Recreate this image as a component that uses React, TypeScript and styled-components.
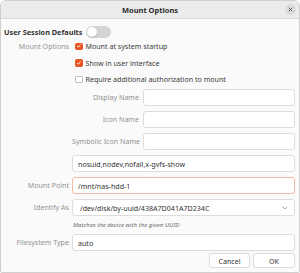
import React from "react";
import styled, { createGlobalStyle } from "styled-components";

const GlobalStyle = createGlobalStyle`
  html, body {
    margin: 0;
    padding: 0;
    background: #ffffff;
  }
  * {
    box-sizing: border-box;
  }
`;

const Window = styled.div`
  width: 300px;
  height: 273px;
  display: flex;
  flex-direction: column;
  background: #fafafa;
  border: 1px solid #cfcfcf;
  border-radius: 6px 6px 2px 2px;
  overflow: hidden;
  font-family: "Noto Sans", "Open Sans", sans-serif;
  font-size: 7.1px;
  color: #3a3a3a;
`;

const HeaderBar = styled.div`
  height: 18px;
  flex: 0 0 18px;
  display: grid;
  grid-template-columns: 1fr auto 1fr;
  align-items: center;
  background: #ebebeb;
  border-bottom: 1px solid #dadada;
  padding: 0 3px;
`;

const Title = styled.div`
  grid-column: 2;
  font-weight: 700;
  font-size: 7.5px;
  color: #2e2e2e;
`;

const CloseButton = styled.div`
  grid-column: 3;
  justify-self: end;
  width: 11px;
  height: 11px;
  border-radius: 50%;
  background: #dcdcdc;
  display: flex;
  align-items: center;
  justify-content: center;
`;

const Content = styled.div`
  flex: 1;
  display: flex;
  flex-direction: column;
  padding: 7px 4px 0 3px;
`;

const SessionRow = styled.div`
  display: flex;
  align-items: center;
  gap: 4px;
  height: 12px;
`;

const SectionTitle = styled.div`
  font-weight: 700;
  font-size: 7.3px;
  color: #333333;
`;

const Toggle = styled.div<{ on: boolean }>`
  position: relative;
  width: 25px;
  height: 12px;
  border-radius: 6px;
  background: ${({ on }) => (on ? "#e95420" : "#d4d4d4")};
`;

const Knob = styled.div<{ on: boolean }>`
  position: absolute;
  top: 1px;
  left: ${({ on }) => (on ? "14px" : "1px")};
  width: 10px;
  height: 10px;
  border-radius: 50%;
  background: #ffffff;
  box-shadow: 0 0.5px 1px rgba(0, 0, 0, 0.25);
`;

const Form = styled.div`
  display: grid;
  grid-template-columns: 65px 1fr;
  column-gap: 3px;
  row-gap: 5px;
  align-items: center;
`;

const Label = styled.div<{ top?: boolean }>`
  text-align: right;
  color: #939393;
  white-space: nowrap;
  align-self: ${({ top }) => (top ? "start" : "center")};
  line-height: 16.5px;
`;

const CheckList = styled.div`
  display: flex;
  flex-direction: column;
  margin-bottom: -3.5px;
`;

const CheckRow = styled.div`
  height: 16.5px;
  display: flex;
  align-items: center;
  gap: 3px;
  padding-left: 3px;
  white-space: nowrap;
`;

const Box = styled.div<{ checked: boolean }>`
  width: 7.5px;
  height: 7.5px;
  border-radius: 1.5px;
  flex: 0 0 7.5px;
  display: flex;
  align-items: center;
  justify-content: center;
  background: ${({ checked }) => (checked ? "#e95420" : "#ffffff")};
  border: 1px solid ${({ checked }) => (checked ? "#e95420" : "#bdbdbd")};
`;

const SubGrid = styled.div`
  grid-column: 2;
  display: grid;
  grid-template-columns: 67px 1fr;
  column-gap: 4px;
  row-gap: 5px;
  align-items: center;
`;

const Entry = styled.div<{ focused?: boolean; span?: boolean }>`
  height: 17px;
  display: flex;
  align-items: center;
  padding: 0 5px;
  background: #ffffff;
  border: 1px solid ${({ focused }) => (focused ? "#f3b9a3" : "#dcdcdc")};
  border-radius: 3px;
  color: #333333;
  white-space: nowrap;
  overflow: hidden;
  grid-column: ${({ span }) => (span ? "2" : "auto")};
`;

const Combo = styled(Entry)`
  justify-content: space-between;
  padding: 0 6px 0 7px;
`;

const Helper = styled.div`
  grid-column: 2;
  font-style: italic;
  font-size: 6.1px;
  color: #6a6a6a;
  height: 8px;
  line-height: 8px;
  padding-left: 1px;
`;

const ButtonRow = styled.div`
  display: flex;
  justify-content: flex-end;
  gap: 3px;
  margin-top: 2px;
`;

const Button = styled.div<{ width: number }>`
  width: ${({ width }) => width}px;
  height: 15px;
  display: flex;
  align-items: center;
  justify-content: center;
  background: #ffffff;
  border: 1px solid #dcdcdc;
  border-radius: 3px;
  color: #333333;
`;

const CheckMark = () => (
  <svg width="6" height="6" viewBox="0 0 12 12">
    <path
      d="M2.5 6.2 L5 8.6 L9.6 3.4"
      fill="none"
      stroke="#ffffff"
      strokeWidth="2"
      strokeLinecap="round"
      strokeLinejoin="round"
    />
  </svg>
);

const options = [
  { text: "Mount at system startup", checked: true },
  { text: "Show in user interface", checked: true },
  { text: "Require additional authorization to mount", checked: false },
];

export default function App() {
  return (
    <>
      <GlobalStyle />
      <Window>
        <HeaderBar>
          <Title>Mount Options</Title>
          <CloseButton>
            <svg width="5" height="5" viewBox="0 0 10 10">
              <path
                d="M2 2 L8 8 M8 2 L2 8"
                stroke="#444444"
                strokeWidth="1.6"
                strokeLinecap="round"
              />
            </svg>
          </CloseButton>
        </HeaderBar>
        <Content>
          <SessionRow>
            <SectionTitle>User Session Defaults</SectionTitle>
            <Toggle on={false}>
              <Knob on={false} />
            </Toggle>
          </SessionRow>
          <Form>
            <Label top>Mount Options</Label>
            <CheckList>
              {options.map((o) => (
                <CheckRow key={o.text}>
                  <Box checked={o.checked}>{o.checked && <CheckMark />}</Box>
                  {o.text}
                </CheckRow>
              ))}
            </CheckList>
            <SubGrid>
              <Label>Display Name</Label>
              <Entry />
              <Label>Icon Name</Label>
              <Entry />
              <Label>Symbolic Icon Name</Label>
              <Entry />
            </SubGrid>
            <Entry span>nosuid,nodev,nofail,x-gvfs-show</Entry>
            <Label>Mount Point</Label>
            <Entry focused>/mnt/nas-hdd-1</Entry>
            <Label>Identify As</Label>
            <Combo>
              <span>/dev/disk/by-uuid/438A7D041A7D234C</span>
              <svg width="6" height="4" viewBox="0 0 12 8">
                <path
                  d="M2 2 L6 6 L10 2"
                  fill="none"
                  stroke="#777777"
                  strokeWidth="1.4"
                  strokeLinecap="round"
                  strokeLinejoin="round"
                />
              </svg>
            </Combo>
            <Helper>Matches the device with the given UUID</Helper>
            <Label>Filesystem Type</Label>
            <Entry>auto</Entry>
          </Form>
          <ButtonRow>
            <Button width={41}>Cancel</Button>
            <Button width={42}>OK</Button>
          </ButtonRow>
        </Content>
      </Window>
    </>
  );
}
